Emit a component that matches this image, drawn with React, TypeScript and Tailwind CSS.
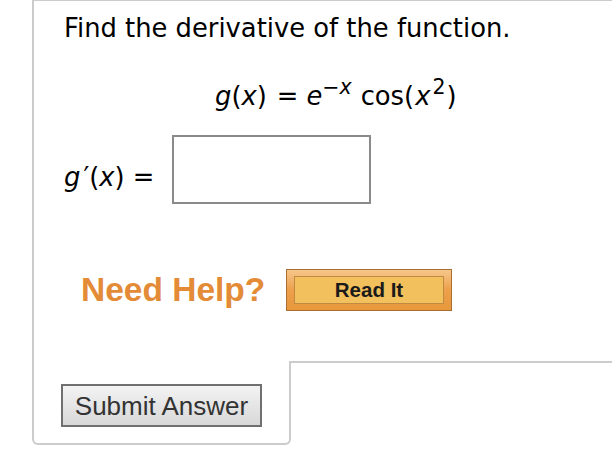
import React from "react";

const mathFont = { fontFamily: '"DejaVu Sans", Verdana, sans-serif' };
const uiFont = { fontFamily: '"Liberation Sans", Arial, Helvetica, sans-serif' };

const Formula: React.FC = () => {
  return (
    <div className="mt-[38px] ml-[151px] text-[25.8px] leading-[30px] whitespace-nowrap">
      <i>g</i>(<i>x</i>)<span className="ml-[10px] mr-[8px]">=</span>
      <i>e</i>
      <span className="relative top-[-11px] text-[20.5px] leading-none">
        −<i>x</i>
      </span>
      <span className="ml-[9px]">cos(</span>
      <i className="ml-[1px]">x</i>
      <span className="relative top-[-11px] ml-[2px] mr-[1px] text-[20.5px] leading-none">2</span>)
    </div>
  );
};

const ReadItButton: React.FC = () => {
  return (
    <div className="flex w-[166px] h-[42px] border border-[#a86e32] bg-gradient-to-b from-[#f6c68a] via-[#eda04a] to-[#e8983c] px-[7px] pt-[6px] pb-[6px]">
      <div
        className="flex-1 flex items-center justify-center border border-[#c08a42] bg-[#f2c05c] text-[20.5px] font-bold text-[#1a1a1a]"
        style={uiFont}
      >
        Read It
      </div>
    </div>
  );
};

const App: React.FC = () => {
  return (
    <div className="w-[612px] h-[472px] bg-white overflow-hidden text-black" style={mathFont}>
      <div className="ml-[32px] mt-[-1px] w-[580px]">
        <section className="h-[362px] border-l-2 border-t-2 border-[#cccccc] pl-[30px] pt-[12px]">
          <div className="text-[25.8px] leading-[30px] whitespace-nowrap">Find the derivative of the function.</div>
          <Formula />
          <div className="mt-[24px] flex items-start">
            <div className="w-[108px] mt-[27px] text-[25.8px] leading-[30px] whitespace-nowrap">
              <i>g</i>
              <span className="ml-[3px]">′</span>(<i>x</i>) =
            </div>
            <div className="w-[199px] h-[69px] border-2 border-[#8a8a8a] bg-white" />
          </div>
          <div className="mt-[65px] flex items-center">
            <div
              className="w-[222px] pl-[17px] text-[33.5px] leading-[36px] font-bold text-[#e38b37]"
              style={uiFont}
            >
              Need Help?
            </div>
            <ReadItButton />
          </div>
        </section>
        <div className="flex">
          <div className="w-[259px] h-[84px] border-l-2 border-r-2 border-b-2 border-[#cccccc] rounded-b-[6px] pl-[27px] pt-[23px]">
            <button
              className="w-[201px] h-[43px] border-2 border-[#707070] bg-gradient-to-b from-[#f3f3f3] to-[#d8d8d8] text-[26px] text-[#333333] leading-none"
              style={uiFont}
            >
              Submit Answer
            </button>
          </div>
          <div className="flex-1 h-[2px] bg-[#cccccc]" />
        </div>
      </div>
    </div>
  );
};

export default App;
